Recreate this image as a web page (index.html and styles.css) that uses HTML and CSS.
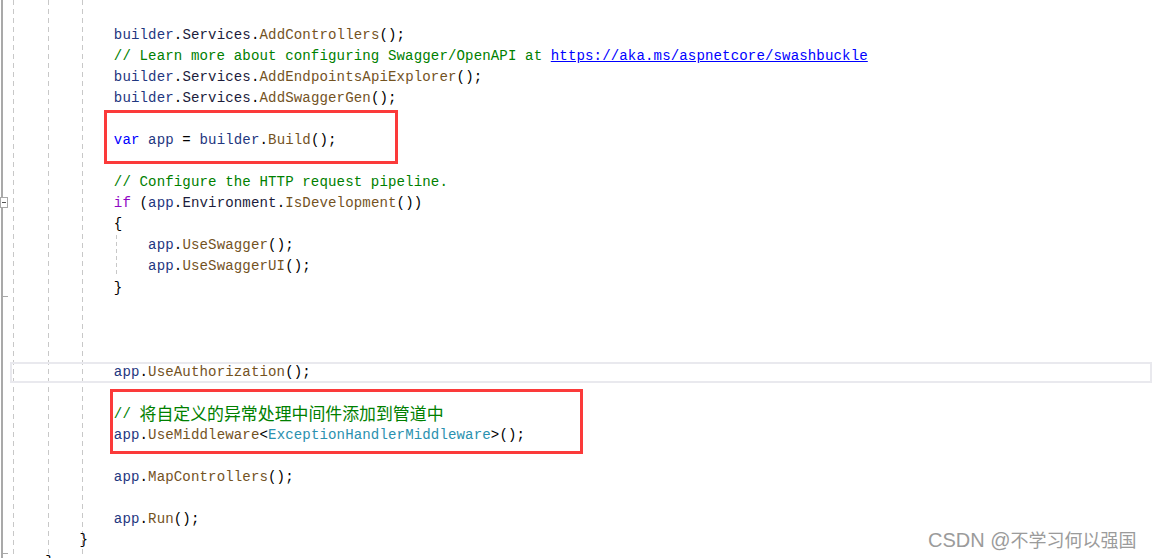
FILE: index.html
```html
<!DOCTYPE html>
<html lang="zh">
<head>
  <meta charset="UTF-8" />
  <meta name="viewport" content="width=device-width, initial-scale=1.0"/>
  <title>Program.cs</title>
  <link rel="stylesheet" href="styles.css">
</head>
<body>
  <div class="page">
    <div class="editor">
      <div class="gutter">
        <span class="fold"></span>
        <span class="tick tick-a"></span>
        <span class="tick tick-b"></span>
      </div>

      <div class="code">
        <div class="line"> </div>
        <div class="line">            <span class="var">builder</span>.<span class="prop">Services</span>.<span class="fn">AddControllers</span>();</div>
        <div class="line">            <span class="cm">// Learn more about configuring Swagger/OpenAPI at <span class="link">https://aka.ms/aspnetcore/swashbuckle</span></span></div>
        <div class="line">            <span class="var">builder</span>.<span class="prop">Services</span>.<span class="fn">AddEndpointsApiExplorer</span>();</div>
        <div class="line">            <span class="var">builder</span>.<span class="prop">Services</span>.<span class="fn">AddSwaggerGen</span>();</div>
        <div class="line"> </div>
        <div class="line">            <span class="kw">var</span> <span class="var">app</span> = <span class="var">builder</span>.<span class="fn">Build</span>();</div>
        <div class="line"> </div>
        <div class="line">            <span class="cm">// Configure the HTTP request pipeline.</span></div>
        <div class="line">            <span class="ctl">if</span> (<span class="var">app</span>.<span class="prop">Environment</span>.<span class="fn">IsDevelopment</span>())</div>
        <div class="line">            {</div>
        <div class="block">
          <div class="line">                <span class="var">app</span>.<span class="fn">UseSwagger</span>();</div>
          <div class="line">                <span class="var">app</span>.<span class="fn">UseSwaggerUI</span>();</div>
        </div>
        <div class="line">            }</div>
        <div class="line"> </div>
        <div class="line"> </div>
        <div class="line"> </div>
        <div class="line current">            <span class="var">app</span>.<span class="fn">UseAuthorization</span>();</div>
        <div class="line"> </div>
        <div class="line">            <span class="cm">// <span class="zh">将自定义的异常处理中间件添加到管道中</span></span></div>
        <div class="line">            <span class="var">app</span>.<span class="fn">UseMiddleware</span>&lt;<span class="type">ExceptionHandlerMiddleware</span>&gt;();</div>
        <div class="line"> </div>
        <div class="line">            <span class="var">app</span>.<span class="fn">MapControllers</span>();</div>
        <div class="line"> </div>
        <div class="line">            <span class="var">app</span>.<span class="fn">Run</span>();</div>
        <div class="line">        }</div>
        <div class="line">    }</div>
      </div>
    </div>

    <div class="mark mark-build"></div>
    <div class="mark mark-middleware"></div>

    <div class="watermark">CSDN @<span class="zh">不学习何以强国</span></div>
  </div>
</body>
</html>
```

FILE: styles.css
```css
html, body {
  margin: 0;
  padding: 0;
  background: #fff;
}

body {
  width: 1152px;
  height: 558px;
  overflow: hidden;
}

.page {
  position: relative;
  width: 1152px;
  height: 558px;
}

.editor {
  display: flex;
  height: 558px;
}

/* left margin with the outline bar */
.gutter {
  position: relative;
  flex: 0 0 10px;
  background-image: linear-gradient(#a9a9a9, #a9a9a9);
  background-size: 2px 100%;
  background-position: 1px 0;
  background-repeat: no-repeat;
}

.fold {
  position: absolute;
  left: 0;
  top: 197px;
  width: 6px;
  height: 9px;
  border: 1px solid #a9a9a9;
  background: #fff;
}

.fold::after {
  content: "";
  position: absolute;
  left: 1px;
  right: 1px;
  top: 4px;
  height: 1px;
  background: #555;
}

.tick {
  position: absolute;
  left: 3px;
  width: 5px;
  height: 1px;
  background: #a9a9a9;
}

.tick-a { top: 296px; }
.tick-b { top: 553px; }

.code {
  flex: 1;
  padding-top: 3.5px;
  font-family: "Liberation Mono", monospace;
  font-size: 14.1px;
  letter-spacing: 0.11px;
  color: #000;
  background-image:
    repeating-linear-gradient(#c8c8c8 0 5px, transparent 5px 9px),
    repeating-linear-gradient(#c8c8c8 0 5px, transparent 5px 9px),
    repeating-linear-gradient(#c8c8c8 0 5px, transparent 5px 9px);
  background-size: 1px 100%;
  background-position: 3px 0, 38px 0, 72px 0;
  background-repeat: no-repeat;
}

.line {
  height: 21.08px;
  line-height: 21.08px;
  padding-left: 1px;
  white-space: pre;
}

.line.current {
  box-shadow: inset 0 0 0 2px #e9e9ee;
}

.block {
  background-image: repeating-linear-gradient(#c8c8c8 0 4px, transparent 4px 7px);
  background-size: 1px 42px;
  background-position: 106px 0;
  background-repeat: no-repeat;
}

.var { color: #1f377f; }
.prop { color: #1c1c3c; }
.fn { color: #74531f; }
.kw { color: #0000ff; }
.ctl { color: #8f08c4; }
.type { color: #2b91af; }
.cm { color: #008000; }

.link {
  color: #0000ff;
  text-decoration: underline;
}

.cm .zh {
  font-family: "Noto Sans CJK SC", sans-serif;
  font-size: 16.9px;
  line-height: 17px;
  letter-spacing: 0;
  vertical-align: top;
}

/* red annotation frames drawn over the screenshot */
.mark {
  position: absolute;
  border: 3px solid #fb3a3a;
  box-sizing: border-box;
}

.mark-build {
  left: 104px;
  top: 110px;
  width: 294px;
  height: 54px;
}

.mark-middleware {
  left: 110px;
  top: 389px;
  width: 473px;
  height: 65px;
}

.watermark {
  position: absolute;
  left: 928px;
  top: 526px;
  font-family: "Liberation Sans", "Noto Sans CJK SC", sans-serif;
  font-size: 20px;
  line-height: 26px;
  color: #9b9b9b;
  white-space: nowrap;
}

.watermark .zh {
  font-family: "Noto Sans CJK SC", sans-serif;
  font-size: 18px;
  letter-spacing: 0;
}
```
